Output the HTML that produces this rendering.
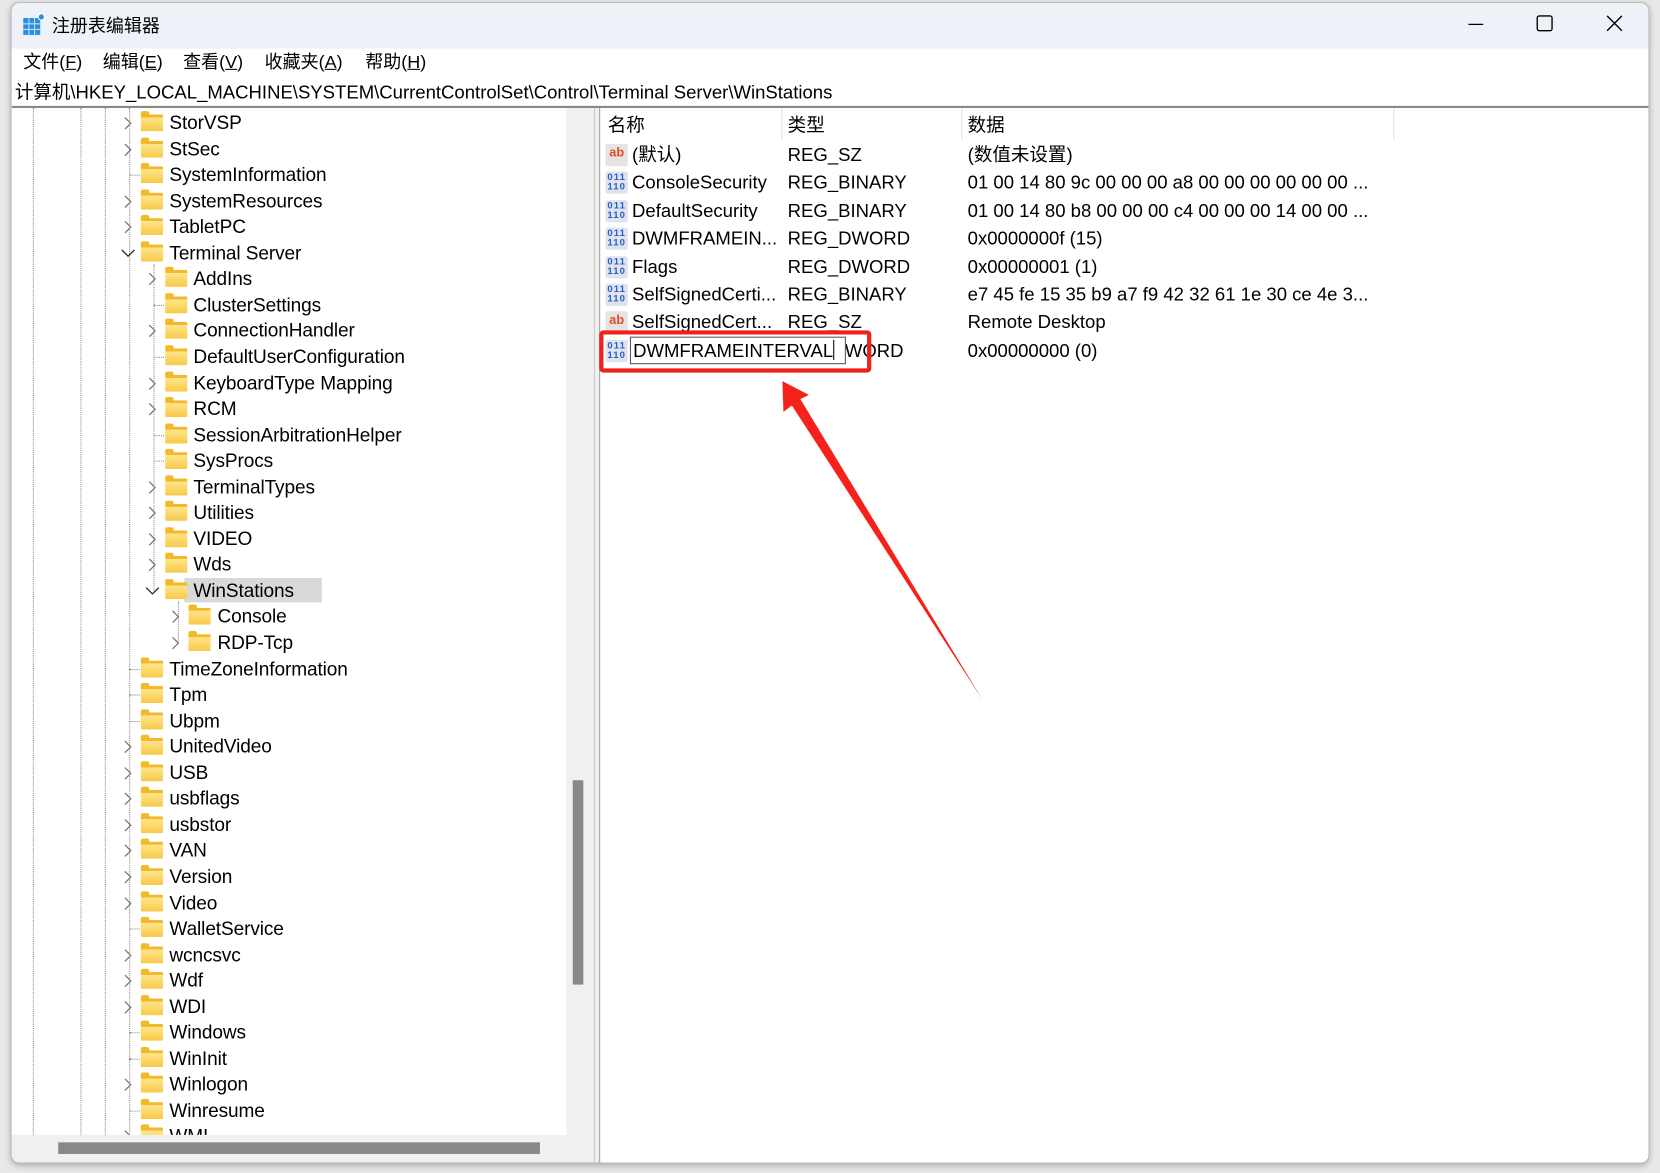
<!DOCTYPE html>
<html><head><meta charset="utf-8">
<style>
*{margin:0;padding:0;box-sizing:border-box}
html,body{width:1660px;height:1173px;overflow:hidden;background:#e9e9e9}
#w{position:absolute;left:0;top:0;width:1568px;height:1108px;transform:scale(1.0587);transform-origin:0 0;font-family:"Liberation Sans","Noto Sans CJK SC",sans-serif;color:#000}
.win{position:absolute;left:10px;top:2px;width:1548px;height:1097px;background:#f0f0f0;border:1px solid #b8b8b8;border-radius:8px;overflow:hidden;box-shadow:0 2px 6px rgba(0,0,0,.25)}
.title{position:absolute;left:0;top:0;width:100%;height:43px;background:#eef2f8}
.title span{position:absolute;left:38px;top:7px;font-size:17px}
.menu{position:absolute;left:0;top:43px;width:100%;height:28px;background:#fff;font-size:17px}
.menu span{position:absolute;top:-2px}
.addr{position:absolute;left:0;top:71px;width:100%;height:28px;background:#fff;font-size:17.5px;padding-left:3px;line-height:26px;border-bottom:2px solid #888}
.tree{position:absolute;left:0;top:99px;width:524px;height:970px;background:#fff;overflow:hidden}
.row{position:absolute;height:24px;font-size:18px;line-height:24px;white-space:nowrap;letter-spacing:-0.1px}
.fold{position:absolute;top:4px;width:21px;height:16px;background:linear-gradient(#ffe58a,#f7c948);border-top:3px solid #f2b92a;border-radius:1px}
.fold:before{content:"";position:absolute;left:0;top:-6px;width:8px;height:4px;background:#f2b92a;border-radius:2px 2px 0 0}
.chev{position:absolute;top:6px}
.vs{position:absolute;left:530px;top:734px;width:10px;height:193px;background:#888}
.hs{position:absolute;left:44px;top:1076px;width:455px;height:11px;background:#888}
.split{position:absolute;left:550px;top:99px;width:6px;height:998px;background:#f0f0f0;border-left:1px solid #ccc;border-right:1px solid #999}
.right{position:absolute;left:556px;top:99px;width:992px;height:998px;background:#fff}
.hd{position:absolute;top:3px;font-size:17.5px}
.hsep{position:absolute;top:0;width:1px;height:30px;background:#e0e0e0}
.r{position:absolute;font-size:17.5px;white-space:nowrap;height:26px;line-height:24px}
.ic{position:absolute;width:21px;height:21px;top:2px;border-radius:2px}
.bin{background:#dfe3ee;color:#2a5fc9;font-size:9px;font-weight:bold;line-height:9px;text-align:center;letter-spacing:1px;padding-top:1px}
.ab{background:#e8e3e3;color:#e24a2a;font-size:12px;font-weight:bold;line-height:16px;text-align:center}
.dl{position:absolute;width:0;border-left:1px dotted #888}
</style></head><body><div id="w">
<div class="win">
 <div class="title">
  <svg style="position:absolute;left:10px;top:9px" width="22" height="22" viewBox="0 0 22 22"><rect x="1" y="5" width="16" height="16" fill="#2d8ee0"/><path d="M1 10.5h16M1 15.8h16M6.3 5v16M11.6 5v16" stroke="#bfe0fb" stroke-width="1"/><circle cx="18" cy="4" r="3" fill="#2d8ee0" stroke="#fff"/></svg>
  <span>注册表编辑器</span>
  <svg style="position:absolute;left:1375px;top:12px" width="16" height="16"><path d="M1 8h14" stroke="#000" stroke-width="1.2"/></svg>
  <svg style="position:absolute;left:1440px;top:11px" width="16" height="16"><rect x="1" y="1" width="14" height="14" rx="2" fill="none" stroke="#000" stroke-width="1.3"/></svg>
  <svg style="position:absolute;left:1506px;top:11px" width="16" height="16"><path d="M1 1l14 14M15 1L1 15" stroke="#000" stroke-width="1.3"/></svg>
 </div>
 <div class="menu">
  <span style="left:11px">文件(<u>F</u>)</span><span style="left:86px">编辑(<u>E</u>)</span><span style="left:162px">查看(<u>V</u>)</span><span style="left:239px">收藏夹(<u>A</u>)</span><span style="left:334px">帮助(<u>H</u>)</span>
 </div>
 <div class="addr">计算机\HKEY_LOCAL_MACHINE\SYSTEM\CurrentControlSet\Control\Terminal Server\WinStations</div>
 <div class="tree" id="tree">
  <div class="dl" style="left:20px;top:0;height:970px"></div>
  <div class="dl" style="left:65px;top:0;height:970px"></div>
  <div class="dl" style="left:88px;top:0;height:970px"></div>
  <div class="dl" style="left:111px;top:0;height:970px"></div>
  <div class="dl" style="left:134px;top:148px;height:310px"></div>
  <div class="dl" style="left:157px;top:466px;height:40px"></div>
 </div>
 <div class="vs"></div>
 <div class="hs"></div>
 <div class="split"></div>
 <div class="right">
  <div class="hd" style="left:7px">名称</div><div class="hsep" style="left:171px"></div>
  <div class="hd" style="left:177px">类型</div><div class="hsep" style="left:341px"></div>
  <div class="hd" style="left:347px">数据</div><div class="hsep" style="left:749px"></div>
  <div id="rows"></div>
  <div style="position:absolute;left:-1px;top:210px;width:257px;height:40px;border:4px solid #f0201b;border-radius:4px"></div>
  <div style="position:absolute;left:28px;top:216px;width:204px;height:26px;border:1px solid #555;background:#fff;font-size:17.5px;line-height:24px;padding-left:2px">DWMFRAMEINTERVAL<span style="display:inline-block;width:1px;height:19px;background:#000;vertical-align:-3px"></span></div>
 </div>
</div>
<svg style="position:absolute;left:0;top:0" width="1568" height="1108"><polygon points="739,360 764,373 756,377 928,661 748,383 740,389" fill="#f5221b"/></svg>
</div>
<script>
var items=[[0,'>','StorVSP'],[0,'>','StSec'],[0,'-','SystemInformation'],[0,'>','SystemResources'],[0,'>','TabletPC'],[0,'v','Terminal Server'],
[1,'>','AddIns'],[1,'-','ClusterSettings'],[1,'>','ConnectionHandler'],[1,'-','DefaultUserConfiguration'],[1,'>','KeyboardType Mapping'],[1,'>','RCM'],[1,'-','SessionArbitrationHelper'],[1,'-','SysProcs'],[1,'>','TerminalTypes'],[1,'>','Utilities'],[1,'>','VIDEO'],[1,'>','Wds'],[1,'v','WinStations'],
[2,'>','Console'],[2,'>','RDP-Tcp'],
[0,'-','TimeZoneInformation'],[0,'-','Tpm'],[0,'-','Ubpm'],[0,'>','UnitedVideo'],[0,'>','USB'],[0,'>','usbflags'],[0,'>','usbstor'],[0,'>','VAN'],[0,'>','Version'],[0,'>','Video'],[0,'-','WalletService'],[0,'>','wcncsvc'],[0,'>','Wdf'],[0,'>','WDI'],[0,'-','Windows'],[0,'-','WinInit'],[0,'>','Winlogon'],[0,'-','Winresume'],[0,'>','WMI']];
var t=document.getElementById('tree'),h='';
items.forEach(function(it,i){var top=2+i*24.55,x=105+it[0]*22.7;
 if(it[2]=='WinStations')h+='<div style="position:absolute;left:'+(x+35)+'px;top:'+(top)+'px;width:130px;height:23px;background:#d9d9d9"></div>';
 h+='<div class="row" style="left:0;top:'+top+'px;width:520px">';
 if(it[1]=='>')h+='<svg class="chev" style="left:'+(x+1)+'px" width="8" height="13"><path d="M1 1l5.5 5.5L1 12" fill="none" stroke="#777" stroke-width="1.2"/></svg>';
 else if(it[1]=='v')h+='<svg class="chev" style="left:'+(x-2)+'px;top:8px" width="14" height="9"><path d="M1 1l6 6 6-6" fill="none" stroke="#333" stroke-width="1.3"/></svg>';
 else h+='<div style="position:absolute;left:'+(x+6)+'px;top:12px;width:10px;border-top:1px dotted #888"></div>';
 h+='<div class="fold" style="left:'+(x+17)+'px"></div><span style="position:absolute;left:'+(x+44)+'px">'+it[2]+'</span></div>';});
t.innerHTML+=h;
var rows=[['ab','(默认)','REG_SZ','(数值未设置)'],['b','ConsoleSecurity','REG_BINARY','01 00 14 80 9c 00 00 00 a8 00 00 00 00 00 00 ...'],['b','DefaultSecurity','REG_BINARY','01 00 14 80 b8 00 00 00 c4 00 00 00 14 00 00 ...'],['b','DWMFRAMEIN...','REG_DWORD','0x0000000f (15)'],['b','Flags','REG_DWORD','0x00000001 (1)'],['b','SelfSignedCerti...','REG_BINARY','e7 45 fe 15 35 b9 a7 f9 42 32 61 1e 30 ce 4e 3...'],['ab','SelfSignedCert...','REG_SZ','Remote Desktop'],['b','','WORD','0x00000000 (0)']];
var r='';
rows.forEach(function(x,i){var top=32+i*26.4;
 r+='<div class="r" style="left:5px;top:'+top+'px"><div class="ic '+(x[0]=='ab'?'ab">ab':'bin">011<br>110')+'</div><span style="position:absolute;left:25px">'+x[1]+'</span></div>';
 r+='<div class="r" style="left:'+(i==7?231:177)+'px;top:'+top+'px">'+x[2]+'</div><div class="r" style="left:347px;top:'+top+'px">'+x[3]+'</div>';});
document.getElementById('rows').innerHTML=r;
</script>
</body></html>
